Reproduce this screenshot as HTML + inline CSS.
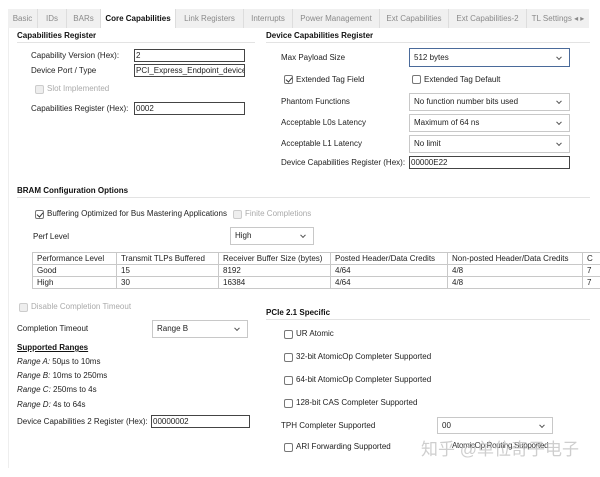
<!DOCTYPE html>
<html><head><meta charset="utf-8"><style>
*{margin:0;padding:0;box-sizing:border-box}
body{width:600px;height:477px;background:#fff;position:relative;overflow:hidden;font-family:"Liberation Sans",Arial,sans-serif;font-size:8px;color:#222}
.a{position:absolute;white-space:nowrap;line-height:10px}
.b{font-weight:bold;color:#111}
.g{color:#aaa}
.tab{position:absolute;top:9px;height:19px;line-height:19px;background:#f0f0f0;color:#8a8a8a;border-right:1px solid #ddd;text-align:center;font-size:8px}
.inp{position:absolute;border:1px solid #444;background:#fff;height:13px;line-height:11px;padding-left:1px;white-space:nowrap;overflow:hidden}
.sel{position:absolute;border:1px solid #c8c8c8;background:#fff;line-height:16px;padding-left:4px;white-space:nowrap}
.sel:after{content:"";position:absolute;right:8px;top:50%;width:3px;height:3px;border-right:1px solid #555;border-bottom:1px solid #555;transform:translateY(-70%) rotate(45deg)}
.line{position:absolute;height:1px;background:#e3e3e3}
.cb{position:absolute;width:9px;height:9px;border:1px solid #777;border-radius:2px;background:#fff}
.cb.d{border-color:#ccc;background:#eee}
.cb.c:after{content:"";position:absolute;left:2px;top:0px;width:3px;height:5px;border-right:1.3px solid #333;border-bottom:1.3px solid #333;transform:rotate(40deg)}
table{position:absolute;left:32px;top:252px;border-collapse:collapse;font-size:8px;width:570px}
td{border:1px solid #c8c8c8;height:12px;padding:0 4px;white-space:nowrap;line-height:10px}
</style></head><body>
<div style="position:absolute;left:8px;top:28px;width:1px;height:440px;background:#eee"></div>
<div class="tab" style="left:8px;width:30px">Basic</div>
<div class="tab" style="left:38px;width:29px">IDs</div>
<div class="tab" style="left:67px;width:34px">BARs</div>
<div class="tab" style="left:101px;width:75px;background:#fff;color:#111;font-weight:bold">Core Capabilities</div>
<div class="tab" style="left:176px;width:68px">Link Registers</div>
<div class="tab" style="left:244px;width:49px">Interrupts</div>
<div class="tab" style="left:293px;width:87px">Power Management</div>
<div class="tab" style="left:380px;width:69px">Ext Capabilities</div>
<div class="tab" style="left:449px;width:78px">Ext Capabilities-2</div>
<div class="tab" style="left:527px;width:62px;border-right:none">TL Settings ◂ ▸</div>

<div class="a b" style="left:17px;top:31px">Capabilities Register</div>
<div class="line" style="left:17px;top:42px;width:238px"></div>
<div class="a" style="left:31px;top:51px">Capability Version (Hex):</div>
<div class="inp" style="left:134px;top:49px;width:111px">2</div>
<div class="a" style="left:31px;top:66px">Device Port / Type</div>
<div class="inp" style="left:134px;top:64px;width:111px">PCI_Express_Endpoint_device</div>
<div class="cb d" style="left:35px;top:85px"></div>
<div class="a g" style="left:47px;top:84px">Slot Implemented</div>
<div class="a" style="left:31px;top:104px">Capabilities Register (Hex):</div>
<div class="inp" style="left:134px;top:102px;width:111px">0002</div>

<div class="a b" style="left:266px;top:31px">Device Capabilities Register</div>
<div class="line" style="left:266px;top:42px;width:324px"></div>
<div class="a" style="left:281px;top:53px">Max Payload Size</div>
<div class="sel" style="left:409px;top:48px;width:161px;height:19px;border-color:#4a6a9a;line-height:17px">512 bytes</div>
<div class="cb c" style="left:284px;top:75px"></div>
<div class="a" style="left:296px;top:75px">Extended Tag Field</div>
<div class="cb" style="left:412px;top:75px"></div>
<div class="a" style="left:424px;top:75px">Extended Tag Default</div>
<div class="a" style="left:281px;top:97px">Phantom Functions</div>
<div class="sel" style="left:409px;top:93px;width:161px;height:18px">No function number bits used</div>
<div class="a" style="left:281px;top:118px">Acceptable L0s Latency</div>
<div class="sel" style="left:409px;top:114px;width:161px;height:18px">Maximum of 64 ns</div>
<div class="a" style="left:281px;top:139px">Acceptable L1 Latency</div>
<div class="sel" style="left:409px;top:135px;width:161px;height:18px">No limit</div>
<div class="a" style="left:281px;top:158px">Device Capabilities Register (Hex):</div>
<div class="inp" style="left:409px;top:156px;width:161px">00000E22</div>

<div class="a b" style="left:17px;top:186px">BRAM Configuration Options</div>
<div class="line" style="left:17px;top:197px;width:573px"></div>
<div class="cb c" style="left:35px;top:210px"></div>
<div class="a" style="left:47px;top:209px">Buffering Optimized for Bus Mastering Applications</div>
<div class="cb d" style="left:233px;top:210px"></div>
<div class="a g" style="left:245px;top:209px">Finite Completions</div>
<div class="a" style="left:33px;top:232px">Perf Level</div>
<div class="sel" style="left:230px;top:227px;width:84px;height:18px">High</div>
<table>
<tr><td style="width:84px">Performance Level</td><td style="width:102px">Transmit TLPs Buffered</td><td style="width:112px">Receiver Buffer Size (bytes)</td><td style="width:117px">Posted Header/Data Credits</td><td style="width:135px">Non-posted Header/Data Credits</td><td>C</td></tr>
<tr><td>Good</td><td>15</td><td>8192</td><td>4/64</td><td>4/8</td><td>7</td></tr>
<tr><td>High</td><td>30</td><td>16384</td><td>4/64</td><td>4/8</td><td>7</td></tr>
</table>

<div class="cb d" style="left:19px;top:303px"></div>
<div class="a g" style="left:31px;top:302px">Disable Completion Timeout</div>
<div class="a" style="left:17px;top:324px">Completion Timeout</div>
<div class="sel" style="left:152px;top:320px;width:96px;height:18px">Range B</div>
<div class="a b" style="left:17px;top:343px;text-decoration:underline">Supported Ranges</div>
<div class="a" style="left:17px;top:357px"><i>Range A:</i> 50µs to 10ms</div>
<div class="a" style="left:17px;top:371px"><i>Range B:</i> 10ms to 250ms</div>
<div class="a" style="left:17px;top:385px"><i>Range C:</i> 250ms to 4s</div>
<div class="a" style="left:17px;top:400px"><i>Range D:</i> 4s to 64s</div>
<div class="a" style="left:17px;top:417px">Device Capabilities 2 Register (Hex):</div>
<div class="inp" style="left:151px;top:415px;width:99px">00000002</div>

<div class="a b" style="left:266px;top:308px">PCIe 2.1 Specific</div>
<div class="line" style="left:266px;top:319px;width:324px"></div>
<div class="cb" style="left:284px;top:330px"></div><div class="a" style="left:296px;top:329px">UR Atomic</div>
<div class="cb" style="left:284px;top:353px"></div><div class="a" style="left:296px;top:352px">32-bit AtomicOp Completer Supported</div>
<div class="cb" style="left:284px;top:376px"></div><div class="a" style="left:296px;top:375px">64-bit AtomicOp Completer Supported</div>
<div class="cb" style="left:284px;top:399px"></div><div class="a" style="left:296px;top:398px">128-bit CAS Completer Supported</div>
<div class="a" style="left:281px;top:421px">TPH Completer Supported</div>
<div class="sel" style="left:437px;top:417px;width:116px;height:17px">00</div>
<div class="cb" style="left:284px;top:443px"></div><div class="a" style="left:296px;top:442px">ARI Forwarding Supported</div>
<div class="a" style="left:452px;top:441px;color:#333;letter-spacing:-0.3px">AtomicOp Routing Supported</div>
<div class="a" style="left:421px;top:440px;font-size:17px;line-height:20px;color:rgba(190,190,190,0.75);font-family:'Liberation Sans','Noto Sans CJK SC',sans-serif">知乎 @单位奇子电子</div>
</body></html>
